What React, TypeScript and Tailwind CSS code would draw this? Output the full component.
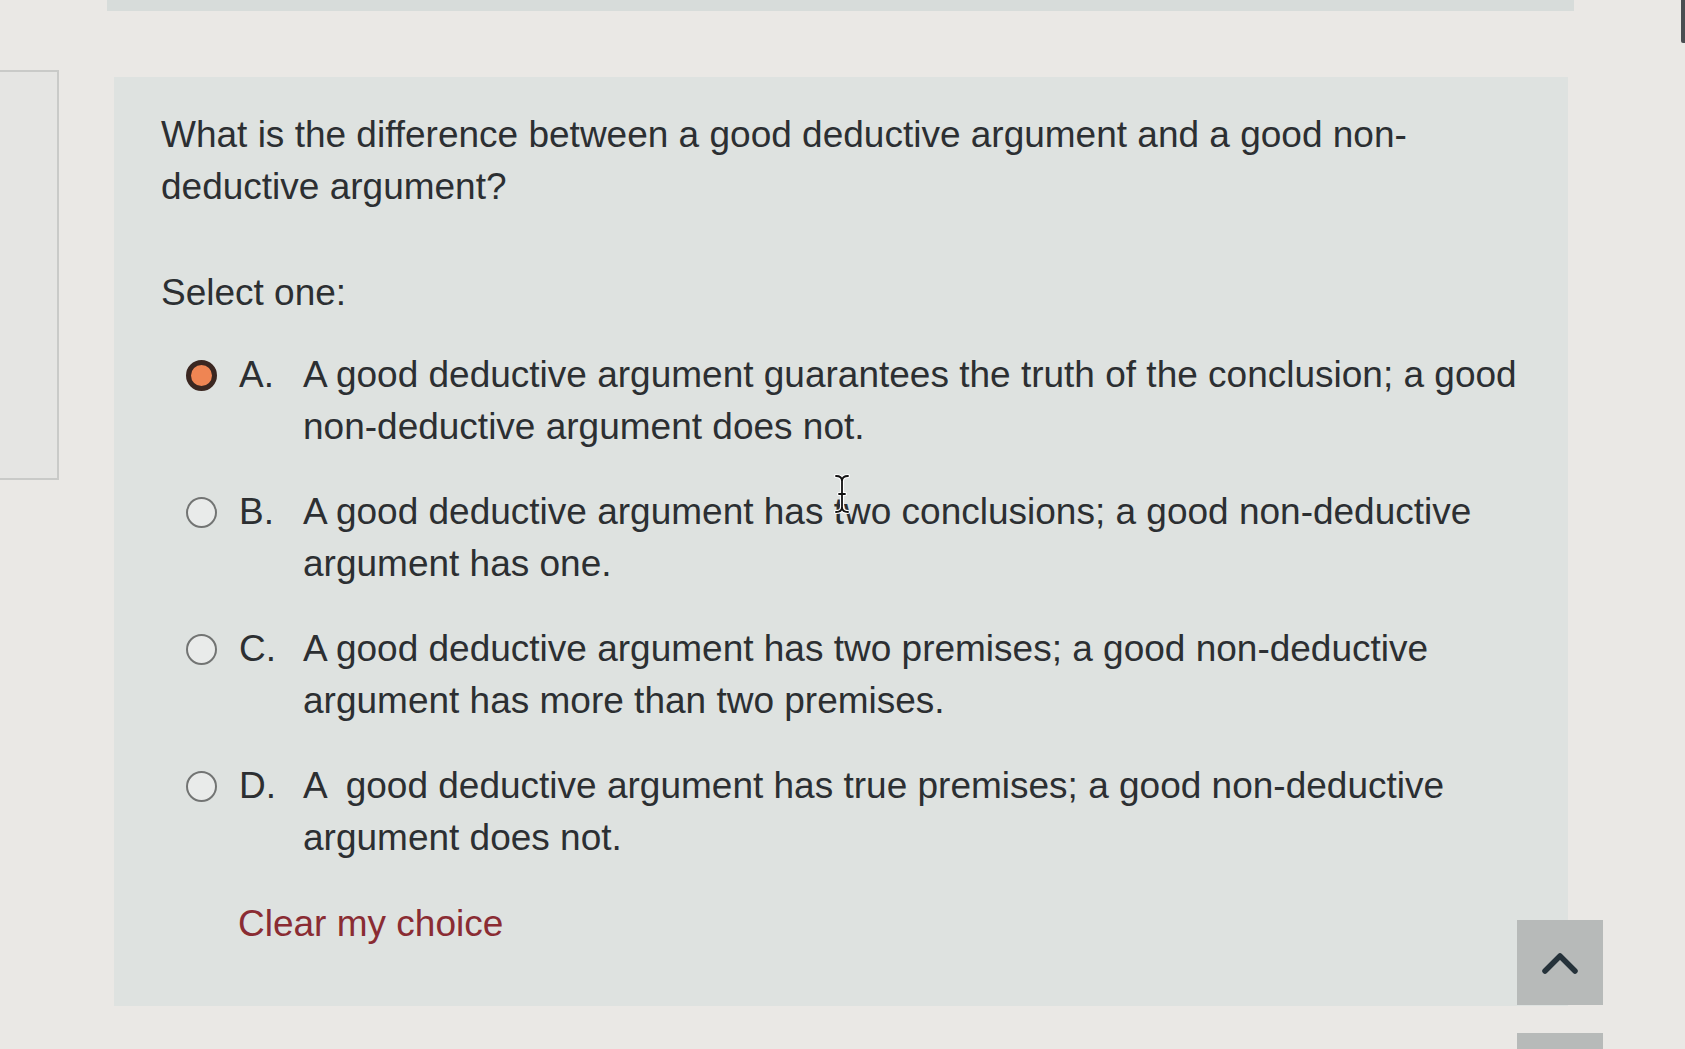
import React from "react";

function Radio({ checked }: { checked?: boolean }) {
  return (
    <div className="h-[52px] flex items-center shrink-0">
      {checked ? (
        <div className="w-[31px] h-[31px] rounded-full border-[5px] border-[#3b2721] bg-[#ef8553]" />
      ) : (
        <div className="w-[31px] h-[31px] rounded-full border-[2.5px] border-[#727473] bg-[#e9ebea]" />
      )}
    </div>
  );
}

function Option({
  letter,
  checked,
  children,
}: {
  letter: string;
  checked?: boolean;
  children: React.ReactNode;
}) {
  return (
    <div className="flex items-start">
      <Radio checked={checked} />
      <span className="ml-[22px] w-[64px] shrink-0">{letter}</span>
      <span className="flex-1">{children}</span>
    </div>
  );
}

export default function App() {
  return (
    <div className="relative w-[1685px] h-[1049px] overflow-hidden bg-[#eae8e5] font-['Liberation_Sans',Arial,sans-serif] text-[#2c2f32] text-[37px] leading-[52px]">
      <div className="flex">
        <div className="w-[59px] shrink-0 pt-[70px]">
          <div className="h-[410px] border-y-2 border-r-2 border-[#c9cac8] bg-[#e5e5e3]" />
        </div>
        <div className="ml-[48px] flex flex-col">
          <div className="h-[11px] w-[1467px] bg-[#d7dcda]" />
          <div className="ml-[7px] mt-[66px] w-[1454px] h-[929px] bg-[#dee2e0] pl-[47px] pr-[23px] pt-[32px]">
            <p>
              What is the difference between a good deductive argument and a
              good non-deductive argument?
            </p>
            <p className="mt-[54px]">Select one:</p>
            <div className="mt-[30px] pl-[25px] flex flex-col gap-[33px]">
              <Option letter="A." checked>
                A good deductive argument guarantees the truth of the
                conclusion; a good non-deductive argument does not.
              </Option>
              <Option letter="B.">
                A good deductive argument has two conclusions; a good
                non-deductive argument has one.
              </Option>
              <Option letter="C.">
                A good deductive argument has two premises; a good
                non-deductive argument has more than two premises.
              </Option>
              <Option letter="D.">
                <span className="mr-[18px]">A</span>good deductive argument has
                true premises; a good non-deductive argument does not.
              </Option>
            </div>
            <div className="mt-[34px] ml-[77px] text-[#8a2c33]">
              Clear my choice
            </div>
          </div>
        </div>
      </div>

      {/* scroll-to-top button */}
      <div className="absolute left-[1517px] top-[920px] w-[86px] h-[85px] bg-[#b7bab9] flex items-center justify-center">
        <svg width="38" height="24" viewBox="0 0 38 24">
          <polyline
            points="4,20 19,5 34,20"
            fill="none"
            stroke="#25323a"
            strokeWidth="5.5"
            strokeLinecap="round"
            strokeLinejoin="round"
          />
        </svg>
      </div>
      <div className="absolute left-[1517px] top-[1033px] w-[86px] h-[30px] bg-[#b7bab9]" />

      {/* right edge dark bar */}
      <div className="absolute left-[1681px] top-0 w-[4px] h-[43px] rounded-bl-[2px] bg-[#4a4e52]" />

      {/* mouse I-beam cursor */}
      <svg
        className="absolute left-[834px] top-[474px]"
        width="16"
        height="40"
        viewBox="0 0 16 40"
      >
        <g fill="none" strokeLinecap="round">
          <path
            d="M2 2 Q8 2 8 7 V33 Q8 38 2 38 M14 2 Q8 2 8 7 M8 33 Q8 38 14 38 M5 20 H11"
            stroke="#ffffff"
            strokeWidth="4"
          />
          <path
            d="M2 2 Q8 2 8 7 V33 Q8 38 2 38 M14 2 Q8 2 8 7 M8 33 Q8 38 14 38 M5 20 H11"
            stroke="#111111"
            strokeWidth="1.8"
          />
        </g>
      </svg>
    </div>
  );
}
